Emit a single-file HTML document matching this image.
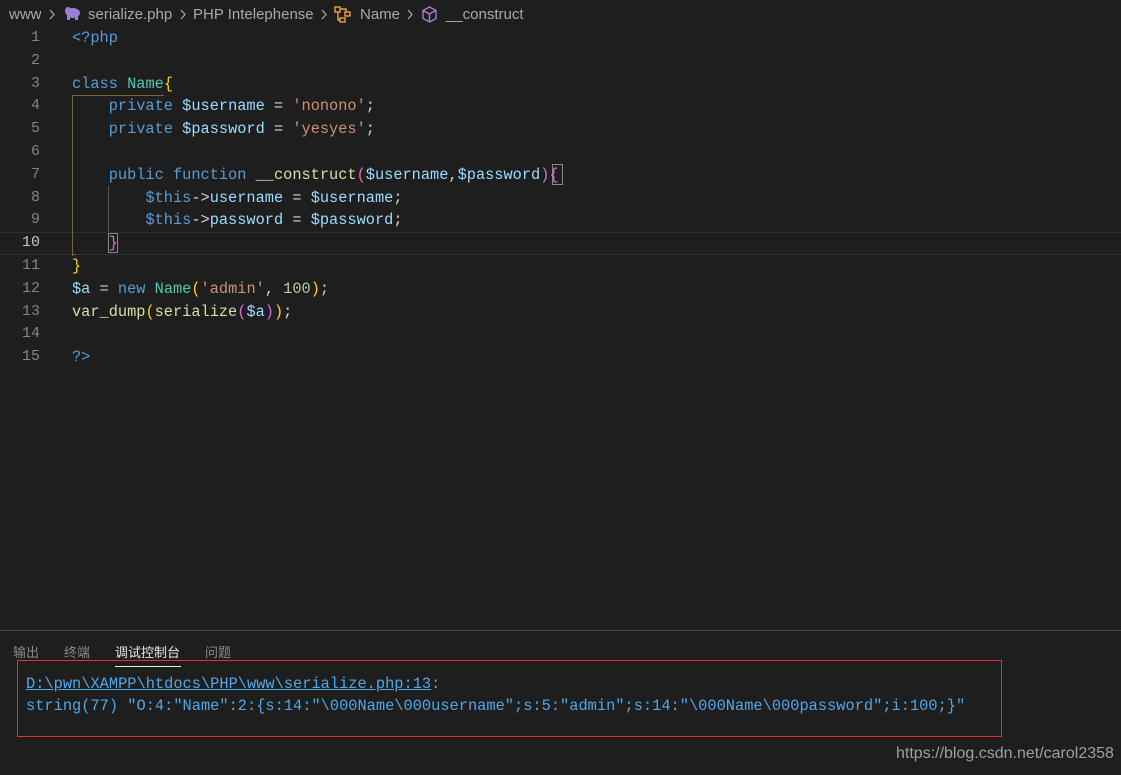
<!DOCTYPE html>
<html><head><meta charset="utf-8"><style>
html,body{margin:0;padding:0;background:#1e1e1e;width:1121px;height:775px;overflow:hidden;position:relative}
.bc{position:absolute;top:4px;font:15px/22px "Liberation Sans","Noto Sans CJK SC",sans-serif;color:#a9a9a9;white-space:nowrap}
.code{position:absolute;top:27px;left:0;font:15.3px/22.8px "Liberation Mono",monospace;white-space:pre}
.ln{position:absolute;left:0;width:40px;text-align:right;color:#858585;font-size:15px}
.tx{position:absolute;left:72px;color:#d4d4d4}
.k{color:#569cd6}.c{color:#4ec9b0}.s{color:#ce9178}.v{color:#9cdcfe}.n{color:#b5cea8}.f{color:#dcdcaa}.y{color:#ffd700}.p{color:#da70d6}.b{color:#179fff}
.panel{position:absolute;top:630px;left:0;width:1121px;border-top:1px solid #444}
.tab{position:absolute;top:642px;font:13px "Liberation Sans","Noto Sans CJK SC",sans-serif;color:#8a8a8a}
.out{position:absolute;left:26px;font:15.35px/22px "Liberation Mono",monospace;color:#4fa8ea;white-space:pre}
</style></head><body>
<div class="bc" style="left:9px">www</div>
<svg style="position:absolute;left:0;top:0" width="560" height="28">
<g fill="none" stroke="#a9a9a9" stroke-width="1.2"><path d="M50 10l4 4.5-4 4.5M181 10l4 4.5-4 4.5M322 10l4 4.5-4 4.5M408 10l4 4.5-4 4.5"/></g>
<g fill="#9b7fd0"><ellipse cx="73" cy="13" rx="7" ry="5"/><rect x="67" y="15" width="3" height="5"/><rect x="75" y="15" width="3" height="5"/><ellipse cx="68" cy="11" rx="3" ry="4"/></g>
<g fill="none" stroke="#e8a33d" stroke-width="1.4"><rect x="335" y="7" width="5" height="5"/><rect x="345" y="12" width="5" height="4"/><rect x="340" y="18" width="5" height="4"/><path d="M340 9h6v3M338 12v8h2"/></g>
<g fill="none" stroke="#b180d7" stroke-width="1.3"><path d="M429.5 7l6.5 3.5v8L429.5 22 423 18.5v-8z M423 10.5l6.5 3.5 6.5-3.5M429.5 14v8"/></g>
</svg>
<div class="bc" style="left:88px">serialize.php</div>
<div class="bc" style="left:193px">PHP Intelephense</div>
<div class="bc" style="left:360px">Name</div>
<div class="bc" style="left:446px">__construct</div>
<div style="position:absolute;left:0;top:232px;width:1121px;height:21px;border-top:1px solid #2e2e2e;border-bottom:1px solid #2e2e2e"></div>
<div style="position:absolute;left:72px;top:95px;width:91px;height:160px;border-left:1px solid #7a6a2a;border-top:1px solid #7a6a2a"></div>
<div style="position:absolute;left:72px;top:254px;width:4px;border-top:1px solid #7a6a2a"></div>
<div style="position:absolute;left:108px;top:186px;height:46px;border-left:1px solid #555"></div>
<div style="position:absolute;left:108px;top:233px;width:10px;height:20px;border:1px solid #888;box-sizing:border-box"></div>
<div style="position:absolute;left:552px;top:164px;width:11px;height:21px;border:1px solid #888;box-sizing:border-box"></div>
<div class="code">
<div class="ln" style="top:0">1</div><div class="tx" style="top:0"><span class="k">&lt;?php</span></div>
<div class="ln" style="top:22.8px">2</div>
<div class="ln" style="top:45.6px">3</div><div class="tx" style="top:45.6px"><span class="k">class</span> <span class="c">Name</span><span class="y">{</span></div>
<div class="ln" style="top:68.4px">4</div><div class="tx" style="top:68.4px">    <span class="k">private</span> <span class="v">$username</span> = <span class="s">'nonono'</span>;</div>
<div class="ln" style="top:91.2px">5</div><div class="tx" style="top:91.2px">    <span class="k">private</span> <span class="v">$password</span> = <span class="s">'yesyes'</span>;</div>
<div class="ln" style="top:114px">6</div>
<div class="ln" style="top:136.8px">7</div><div class="tx" style="top:136.8px">    <span class="k">public</span> <span class="k">function</span> <span class="f">__construct</span><span class="p">(</span><span class="v">$username</span>,<span class="v">$password</span><span class="p">)</span><span class="p">{</span></div>
<div class="ln" style="top:159.6px">8</div><div class="tx" style="top:159.6px">        <span class="k">$this</span>-&gt;<span class="v">username</span> = <span class="v">$username</span>;</div>
<div class="ln" style="top:182.4px">9</div><div class="tx" style="top:182.4px">        <span class="k">$this</span>-&gt;<span class="v">password</span> = <span class="v">$password</span>;</div>
<div class="ln" style="top:205.2px;color:#c6c6c6">10</div><div class="tx" style="top:205.2px">    <span class="p">}</span></div>
<div class="ln" style="top:228px">11</div><div class="tx" style="top:228px"><span class="y">}</span></div>
<div class="ln" style="top:250.8px">12</div><div class="tx" style="top:250.8px"><span class="v">$a</span> = <span class="k">new</span> <span class="c">Name</span><span class="y">(</span><span class="s">'admin'</span>, <span class="n">100</span><span class="y">)</span>;</div>
<div class="ln" style="top:273.6px">13</div><div class="tx" style="top:273.6px"><span class="f">var_dump</span><span class="y">(</span><span class="f">serialize</span><span class="p">(</span><span class="v">$a</span><span class="p">)</span><span class="y">)</span>;</div>
<div class="ln" style="top:296.4px">14</div>
<div class="ln" style="top:319.2px">15</div><div class="tx" style="top:319.2px"><span class="k">?&gt;</span></div>
</div>
<div class="panel"></div>
<div class="tab" style="left:13px">输出</div>
<div class="tab" style="left:64px">终端</div>
<div class="tab" style="left:115px;color:#e7e7e7">调试控制台</div>
<div style="position:absolute;left:115px;top:666px;width:66px;border-top:1px solid #e7e7e7"></div>
<div class="tab" style="left:205px">问题</div>
<div style="position:absolute;left:17px;top:660px;width:985px;height:77px;border:1px solid #e03030;box-sizing:border-box"></div>
<div class="out" style="top:673px"><span style="text-decoration:underline">D:\pwn\XAMPP\htdocs\PHP\www\serialize.php:13</span>:</div>
<div class="out" style="top:695px">string(77) "O:4:"Name":2:{s:14:"\000Name\000username";s:5:"admin";s:14:"\000Name\000password";i:100;}"</div>
<div style="position:absolute;left:896px;top:745px;font:16px 'Liberation Sans',sans-serif;color:#a0a0a0">https://blog.csdn.net/carol2358</div>
</body></html>
